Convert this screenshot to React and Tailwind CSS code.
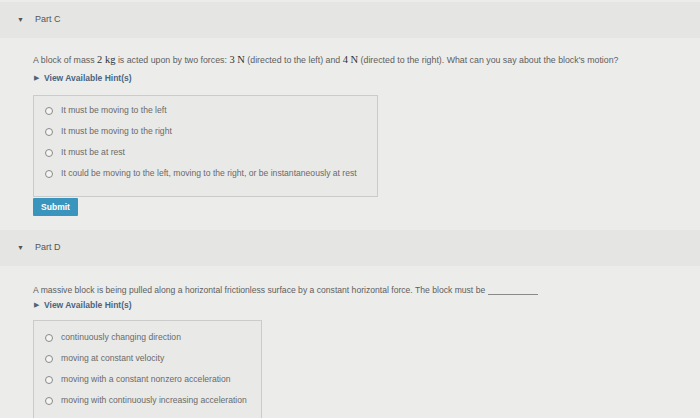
const sans = { fontFamily: '"Liberation Sans", Arial, sans-serif' };

function Radio({ label }) {
  return (
    <div className="flex h-[21px] items-center">
      <span className="ml-[11px] mr-[8px] h-[8px] w-[8px] rounded-full border border-[#8a8a8a] bg-[#f4f4f2]" />
      <span className="text-[8.6px] text-[#6a6a6a]">{label}</span>
    </div>
  );
}

function Header({ title, className }) {
  return (
    <div className={`flex items-center bg-[#e5e5e3] ${className}`}>
      <span className="ml-[17px] mr-[11px] text-[7px] text-[#555]">▼</span>
      <span className="text-[9px] text-[#555]">{title}</span>
    </div>
  );
}

function Hint() {
  return (
    <div className="flex h-[18px] items-center pl-[34px]">
      <span className="mr-[5px] text-[7px] text-[#4f6478]">▶</span>
      <span className="text-[8.5px] font-bold text-[#4a6580]">View Available Hint(s)</span>
    </div>
  );
}

export default function App() {
  return (
    <div className="h-[418px] w-[700px] overflow-hidden bg-[#ececea]" style={sans}>
      <Header title="Part C" className="h-[36px] mt-[2px]" />
      <div className="pl-[33px] pt-[15px]">
        <div className="flex h-[14px] items-center text-[8.8px] text-[#5e5e5e]">
          <span>
            A block of mass{' '}
            <span className="font-['Liberation_Serif'] text-[10.5px] text-[#333]">2 kg</span> is acted upon by two forces:{' '}
            <span className="font-['Liberation_Serif'] text-[10.5px] text-[#333]">3 N</span> (directed to the left) and{' '}
            <span className="font-['Liberation_Serif'] text-[10.5px] text-[#333]">4 N</span> (directed to the right). What can you say about the block's motion?
          </span>
        </div>
      </div>
      <div className="mt-[2px]">
        <Hint />
      </div>
      <div className="ml-[33px] mt-[8px] w-[345px] border border-[#cbcbc9] bg-[#e9e9e7] py-[4px]">
        <Radio label="It must be moving to the left" />
        <Radio label="It must be moving to the right" />
        <Radio label="It must be at rest" />
        <Radio label="It could be moving to the left, moving to the right, or be instantaneously at rest" />
        <div className="h-[8px]" />
      </div>
      <button className="ml-[33px] mt-[1px] flex h-[18px] w-[45px] items-center justify-center rounded-[1px] bg-[#3a95be] text-[8.5px] font-bold text-white">
        Submit
      </button>
      <Header title="Part D" className="mt-[14px] h-[36px]" />
      <div className="pl-[33px] pt-[18px]">
        <div className="flex h-[12px] items-center text-[8.6px] text-[#5e5e5e]">
          <span>A massive block is being pulled along a horizontal frictionless surface by a constant horizontal force. The block must be</span>
          <span className="ml-[3px] mt-[8px] w-[50px] border-b border-[#8a8a8a]" />
        </div>
      </div>
      <Hint />
      <div className="ml-[33px] mt-[6px] w-[229px] border border-[#cbcbc9] bg-[#e9e9e7] pt-[6px] pb-[8px]">
        <Radio label="continuously changing direction" />
        <Radio label="moving at constant velocity" />
        <Radio label="moving with a constant nonzero acceleration" />
        <Radio label="moving with continuously increasing acceleration" />
      </div>
    </div>
  );
}
